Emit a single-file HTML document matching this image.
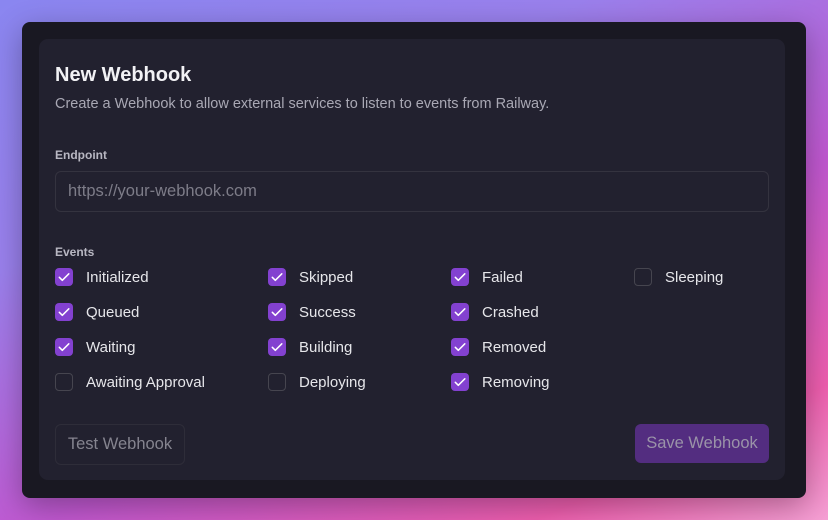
<!DOCTYPE html><html><head><style>
body{margin:0;width:828px;height:520px;overflow:hidden;font-family:"Liberation Sans",sans-serif;
background:linear-gradient(155deg,#8a86f0 0%,#9a80ec 30%,#c058d0 60%,#ee5eae 85%,#f5a0d4 100%);position:relative}
.outer{position:absolute;left:22px;top:22px;width:784px;height:476px;background:#191822;border-radius:8px;box-shadow:0 8px 30px rgba(0,0,0,.3)}
.inner{position:absolute;left:17px;top:17px;width:746px;height:441px;background:#22212f;border-radius:9px}
.abs{position:absolute}
h1{position:absolute;left:16px;top:25px;margin:0;font-size:20px;font-weight:bold;color:#f2f2f5}
.sub{left:16px;top:57px;font-size:14.5px;color:#a9a8b4}
.lbl{font-size:12px;font-weight:bold;color:#b8b7c2;left:16px}
.input{left:16px;top:132px;height:39px;border:1px solid #34333f;border-radius:6px;color:#7d7c88;font-size:16.5px;line-height:39px;padding-left:12px;box-sizing:content-box;width:700px}
.cb{position:absolute;width:18px;height:18px;border-radius:4px;box-sizing:border-box}
.on{background:#8341d0}
.off{border:1.5px solid #46454f}
.t{position:absolute;font-size:15px;color:#e6e6ea;line-height:18px}
.btn{position:absolute;top:385px;height:39px;border-radius:6px;font-size:16.5px;line-height:39px;text-align:center}
</style></head><body>
<div class="outer"><div class="inner">
<h1>New Webhook</h1>
<div class="abs sub">Create a Webhook to allow external services to listen to events from Railway.</div>
<div class="abs lbl" style="top:109px">Endpoint</div>
<div class="abs input">https://your-webhook.com</div>
<div class="abs lbl" style="top:206px">Events</div>
<div id="g"></div>
<div class="btn" style="left:16px;width:128px;border:1px solid #2e2d39;color:#85848f">Test Webhook</div>
<div class="btn" style="left:596px;width:134px;background:#532d80;color:#9a93a8">Save Webhook</div>
</div></div>
<script>
var cols=[16,229,412,595],rows=[229,264,299,334];
var d=[["Initialized",1,"Skipped",1,"Failed",1,"Sleeping",0],["Queued",1,"Success",1,"Crashed",1],["Waiting",1,"Building",1,"Removed",1],["Awaiting Approval",0,"Deploying",0,"Removing",1]];
var h="";
d.forEach(function(r,i){for(var j=0;j<r.length;j+=2){var x=cols[j/2],y=rows[i];
h+='<div class="cb '+(r[j+1]?'on':'off')+'" style="left:'+x+'px;top:'+y+'px">'+(r[j+1]?'<svg width="18" height="18" viewBox="0 0 18 18"><path d="M4.3 9.3l3 3L13.8 5.8" fill="none" stroke="#fff" stroke-width="1.5" stroke-linecap="round" stroke-linejoin="round"/></svg>':'')+'</div>';
h+='<div class="t" style="left:'+(x+31)+'px;top:'+(y+1)+'px">'+r[j]+'</div>';}});
document.getElementById("g").innerHTML=h;
</script>
</body></html>
